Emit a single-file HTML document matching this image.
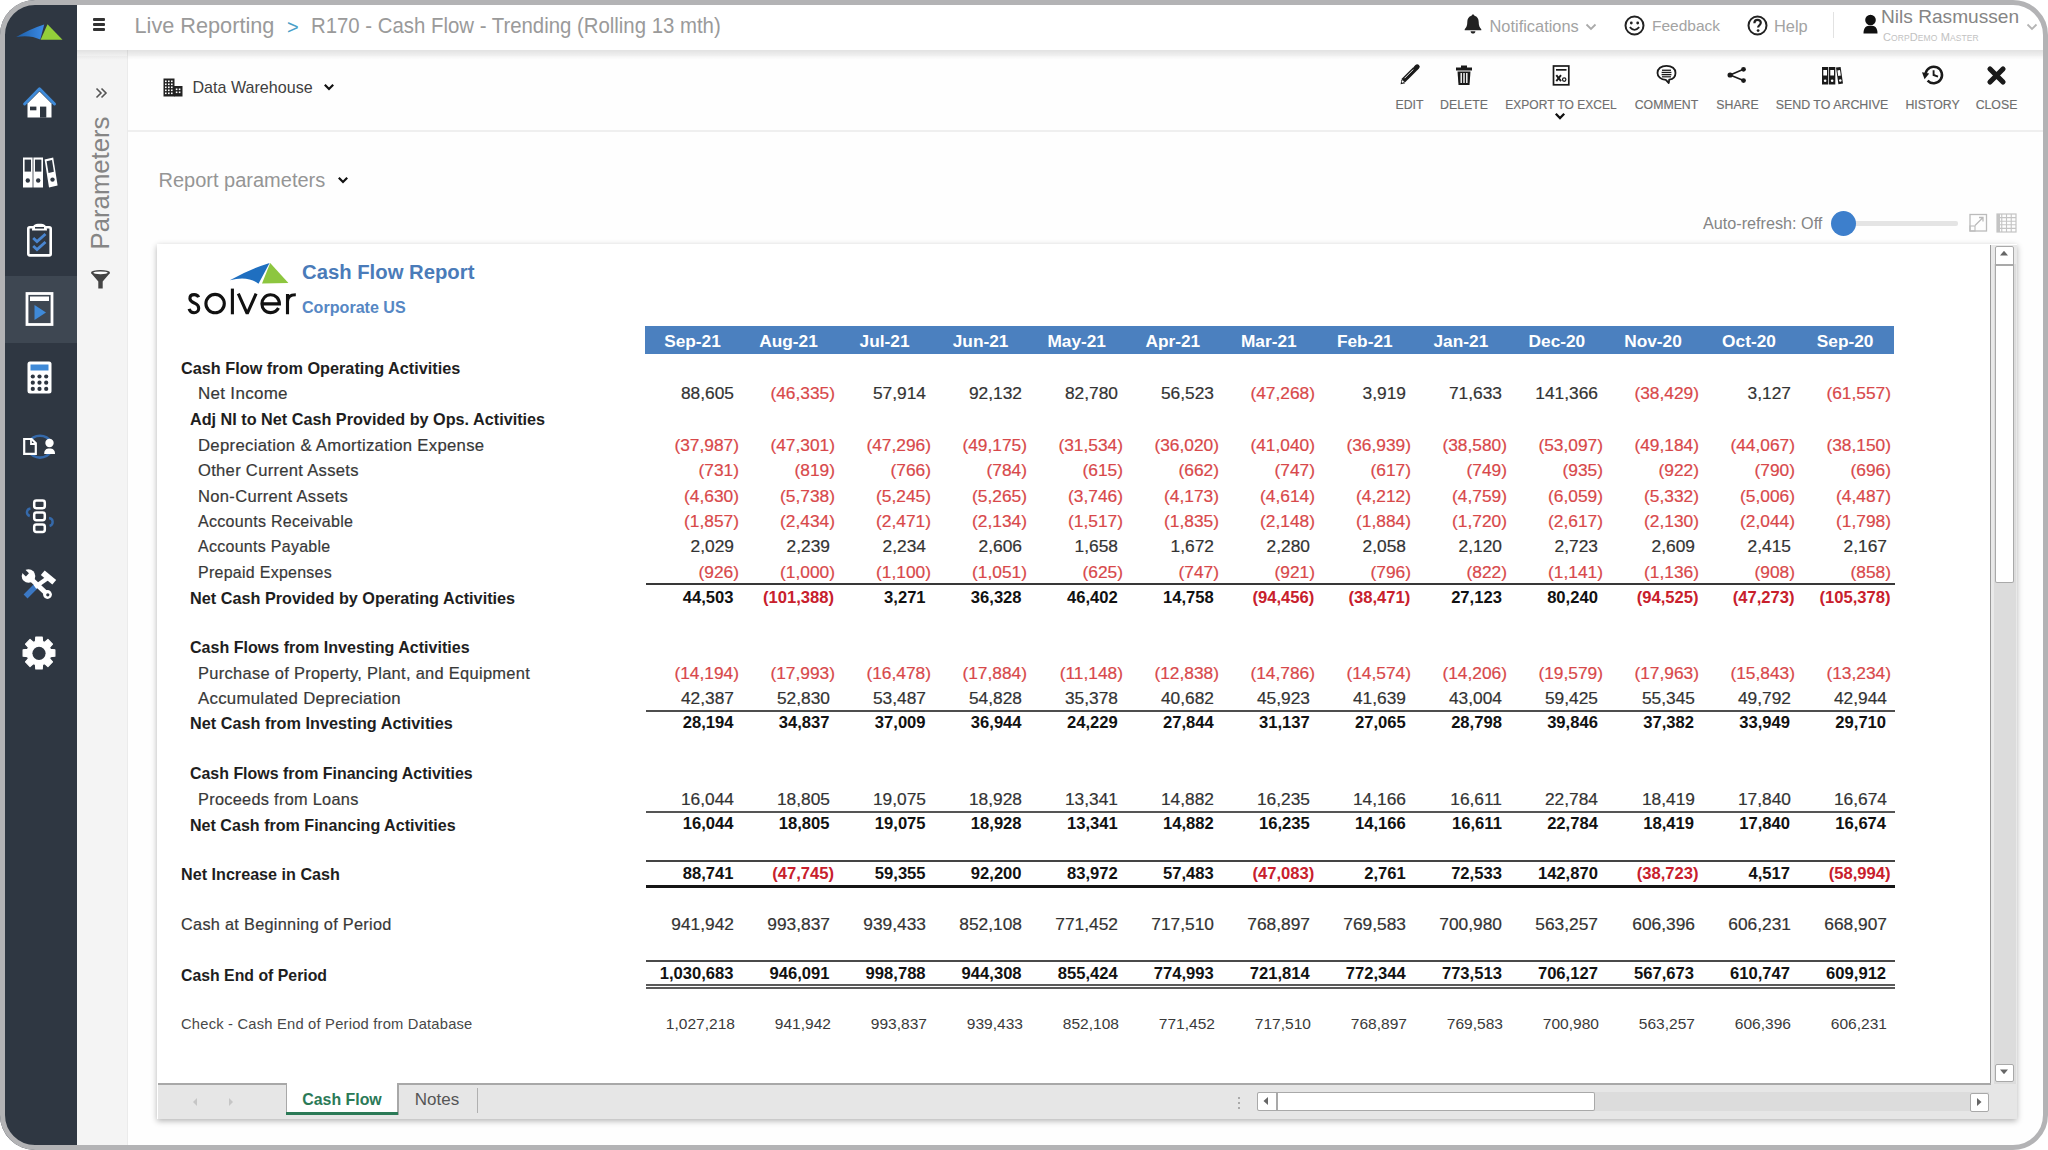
<!DOCTYPE html>
<html><head><meta charset="utf-8"><title>Cash Flow</title>
<style>
html,body{margin:0;padding:0;width:2048px;height:1150px;overflow:hidden;background:#fff;}
body{font-family:"Liberation Sans", sans-serif;position:relative;}
.t{position:absolute;white-space:nowrap;}
.b{position:absolute;}
svg{position:absolute;overflow:visible;}
#clip{position:absolute;left:0;top:0;width:2048px;height:1150px;border-radius:35px;overflow:hidden;background:#fbfbfb;}
#frame{position:absolute;left:0;top:0;width:2048px;height:1150px;box-sizing:border-box;border:5px solid #b3b3b5;border-radius:35px;z-index:50;}
</style></head><body>
<div id="clip">

<div class="b" style="left:0px;top:0px;width:77px;height:1150px;background:#2f3742;"></div>
<div class="b" style="left:5px;top:276px;width:72px;height:67px;background:#3e4752;"></div>
<div class="b" style="left:77px;top:0px;width:1971px;height:50px;background:#fff;"></div>
<div class="b" style="left:77px;top:50px;width:1971px;height:10px;background:linear-gradient(rgba(0,0,0,0.10),rgba(0,0,0,0));z-index:2;"></div>
<div class="b" style="left:77px;top:56px;width:50px;height:1094px;background:#f4f4f4;"></div>
<div class="b" style="left:127px;top:50px;width:1px;height:1100px;background:#ebebeb;"></div>
<div class="b" style="left:128px;top:56px;width:1920px;height:1094px;background:#fefefe;"></div>
<div class="b" style="left:128px;top:130px;width:1915px;height:2px;background:#efefef;"></div>
<div class="b" style="left:93px;top:18px;width:12px;height:2.6px;background:#333;border-radius:1px;"></div>
<div class="b" style="left:93px;top:23px;width:12px;height:2.6px;background:#333;border-radius:1px;"></div>
<div class="b" style="left:93px;top:28px;width:12px;height:2.6px;background:#333;border-radius:1px;"></div>
<svg style="left:0;top:0" width="77" height="50" viewBox="0 0 77 50"><defs><linearGradient id="lg1" x1="0" x2="1"><stop offset="0" stop-color="#1d5fa8"/><stop offset="1" stop-color="#3b8ae6"/></linearGradient></defs><path d="M16.2 37 Q30 34.5 40.3 39.6 L44.2 24.4 Q31 28.5 16.2 37 Z" fill="url(#lg1)"/><path d="M47.5 24.3 L62.5 39.8 L40.6 39.8 Z" fill="#94cf3a"/></svg>
<div class="t" style="left:134.5px;top:15.4px;font-size:21.7px;line-height:21.7px;color:#9a9a9a;">Live Reporting</div>
<div class="t" style="left:287.0px;top:16.6px;font-size:20px;line-height:20px;color:#4a9fc8;">&gt;</div>
<div class="t" style="left:310.7px;top:15.4px;font-size:21.7px;line-height:21.7px;transform:scaleX(0.9390);transform-origin:left center;color:#9a9a9a;">R170 - Cash Flow - Trending (Rolling 13 mth)</div>
<svg style="left:1464px;top:13px" width="18" height="21" viewBox="0 0 18 21"><path d="M9 1.5c.9 0 1.4.6 1.4 1.3 2.9.7 4.3 3.2 4.3 6.2 0 3.2.8 5.5 2.6 7.3v.9H.7v-.9C2.5 14.5 3.3 12.2 3.3 9c0-3 1.4-5.5 4.3-6.2 0-.7.5-1.3 1.4-1.3z" fill="#222"/><path d="M6.6 18.2h4.8c0 1.4-1.1 2.3-2.4 2.3s-2.4-.9-2.4-2.3z" fill="#222"/></svg>
<div class="t" style="left:1489.5px;top:17.6px;font-size:16.4px;line-height:16.4px;color:#a3a3a3;">Notifications</div>
<svg style="left:1585px;top:23px" width="12" height="8" viewBox="0 0 12 8"><path d="M1.5 1.5 L6 6 L10.5 1.5" stroke="#aaa" stroke-width="1.8" fill="none"/></svg>
<svg style="left:1624px;top:15px" width="21" height="21" viewBox="0 0 21 21"><circle cx="10.5" cy="10.5" r="9" stroke="#222" stroke-width="2" fill="none"/><circle cx="7.3" cy="8" r="1.4" fill="#222"/><circle cx="13.7" cy="8" r="1.4" fill="#222"/><path d="M5.8 12.2 Q10.5 17.5 15.2 12.2" stroke="#222" stroke-width="1.8" fill="none"/></svg>
<div class="t" style="left:1652.0px;top:18.4px;font-size:15.5px;line-height:15.5px;color:#a3a3a3;">Feedback</div>
<svg style="left:1747px;top:15px" width="21" height="21" viewBox="0 0 21 21"><circle cx="10.5" cy="10.5" r="9" stroke="#222" stroke-width="2" fill="none"/><path d="M7.4 8.2 C7.4 5.8 9 4.9 10.6 4.9 C12.4 4.9 13.8 6 13.8 7.8 C13.8 10.1 11.1 10.3 11.1 12.6" stroke="#222" stroke-width="2.2" fill="none"/><circle cx="11.1" cy="15.6" r="1.4" fill="#222"/></svg>
<div class="t" style="left:1774.0px;top:17.6px;font-size:16.4px;line-height:16.4px;color:#a3a3a3;">Help</div>
<div class="b" style="left:1833px;top:12px;width:1px;height:26px;background:#e2e2e2;"></div>
<svg style="left:1863px;top:14px" width="16" height="21" viewBox="0 0 16 21"><circle cx="7.5" cy="6" r="5.3" fill="#111"/><path d="M0.5 19.5 C0.5 13.5 3 11.8 7.5 11.8 C12 11.8 14.5 13.5 14.5 19.5 Z" fill="#111"/></svg>
<div class="t" style="left:1881.0px;top:8.3px;font-size:18.6px;line-height:18.6px;transform:scaleX(1.0280);transform-origin:left center;color:#858585;">Nils Rasmussen</div>
<div class="t" style="left:1883.0px;top:31.7px;font-size:11px;line-height:11px;color:#c2c2c2;letter-spacing:0.1px;">C<span style="font-size:8.5px">ORP</span>D<span style="font-size:8.5px">EMO</span> M<span style="font-size:8.5px">ASTER</span></div>
<svg style="left:2026px;top:23px" width="12" height="8" viewBox="0 0 12 8"><path d="M1.5 1.5 L6 6 L10.5 1.5" stroke="#b5b5b5" stroke-width="1.8" fill="none"/></svg>
<svg style="left:22px;top:86px" width="34" height="34" viewBox="0 0 34 34"><path d="M5.5 17.5 L17.5 5.5 L29.5 17.5 V31.6 H5.5 Z" fill="#ffffff"/><rect x="8" y="20.6" width="6.4" height="3.7" fill="#2e3640"/><rect x="18" y="20.6" width="6.3" height="11" fill="#2e3640"/><path d="M2.6 18 L17.5 2.8 L32.5 18" stroke="#3f8ad8" stroke-width="3" fill="none" stroke-linejoin="round" stroke-linecap="round"/></svg>
<svg style="left:22px;top:156px" width="36" height="33" viewBox="0 0 36 33"><rect x="1" y="1.5" width="9.6" height="30" fill="#ffffff"/><rect x="11.4" y="1.5" width="9.6" height="30" fill="#ffffff"/><path d="M22.6 3.6 L31.2 1.6 L35.6 29.6 L27 31.6 Z" fill="#ffffff"/><rect x="2.6" y="3.6" width="6.4" height="12" fill="#2f3742"/><rect x="13" y="3.6" width="6.4" height="12" fill="#2f3742"/><path d="M24.6 5.2 L30 4 L31.9 15.8 L26.5 17 Z" fill="#2f3742"/><circle cx="5.8" cy="24.5" r="2.2" fill="#2f3742"/><circle cx="16.2" cy="24.5" r="2.2" fill="#2f3742"/><circle cx="30.5" cy="23.6" r="2.2" fill="#2f3742"/></svg>
<svg style="left:26px;top:221px" width="27" height="36" viewBox="0 0 27 36"><rect x="2.3" y="6.2" width="22.4" height="28.2" rx="1.5" stroke="#ffffff" stroke-width="2.6" fill="none"/><path d="M6 9.5 C6 4.5 8.5 2.8 13.5 2.8 C18.5 2.8 21 4.5 21 9.5 Z" fill="#ffffff"/><rect x="9" y="6" width="9" height="1.6" fill="#2f3742"/><path d="M7.2 17 L11 20.6 L19.5 13" stroke="#4a86d0" stroke-width="2.8" fill="none"/><path d="M7.2 25 L11 28.6 L19.5 21" stroke="#4a86d0" stroke-width="2.8" fill="none"/></svg>
<svg style="left:25px;top:291px" width="29" height="36" viewBox="0 0 29 36"><rect x="2" y="2.5" width="25" height="31" stroke="#ffffff" stroke-width="2.8" fill="none"/><rect x="5" y="5.5" width="19" height="4.5" fill="#ffffff"/><path d="M9.5 14 L21 21.5 L9.5 29 Z" fill="#3f8ad8"/></svg>
<svg style="left:27px;top:361px" width="25" height="33" viewBox="0 0 25 33"><rect x="0.5" y="0.5" width="24" height="32" rx="2.5" fill="#ffffff"/><rect x="3.5" y="3.5" width="18" height="6" fill="#3f8ad8"/><circle cx="5.8" cy="15.5" r="2.1" fill="#2e3640"/><circle cx="5.8" cy="21.7" r="2.1" fill="#2e3640"/><circle cx="5.8" cy="27.9" r="2.1" fill="#2e3640"/><circle cx="12.5" cy="15.5" r="2.1" fill="#2e3640"/><circle cx="12.5" cy="21.7" r="2.1" fill="#2e3640"/><circle cx="12.5" cy="27.9" r="2.1" fill="#2e3640"/><circle cx="19.2" cy="15.5" r="2.1" fill="#2e3640"/><circle cx="19.2" cy="21.7" r="2.1" fill="#2e3640"/><circle cx="19.2" cy="27.9" r="2.1" fill="#2e3640"/></svg>
<svg style="left:22px;top:430px" width="36" height="34" viewBox="0 0 36 34"><path d="M6.8 12.2 A13 13 0 0 1 29.2 12.2" stroke="#3569aa" stroke-width="2.6" fill="none"/><path d="M29.2 21.2 A13 13 0 0 1 6.8 21.2" stroke="#3569aa" stroke-width="2.6" fill="none"/><path d="M2.2 9 H9.6 L13.8 13.2 V23.8 H2.2 Z" stroke="#ffffff" stroke-width="2.2" fill="#2f3742" stroke-linejoin="miter"/><path d="M9 9 V14 H13.8" stroke="#ffffff" stroke-width="1.8" fill="none"/><circle cx="27.5" cy="13" r="4.2" fill="#ffffff"/><path d="M22.2 24 C22.2 19.6 24.2 18.4 27.5 18.4 C30.8 18.4 33 19.6 33 24 Z" fill="#ffffff"/></svg>
<svg style="left:24px;top:498px" width="32" height="37" viewBox="0 0 32 37"><rect x="10.2" y="2.6" width="10.6" height="7.6" rx="2.2" stroke="#ffffff" stroke-width="2.5" fill="none"/><rect x="10.2" y="14.6" width="10.6" height="7.6" rx="2.2" stroke="#ffffff" stroke-width="2.5" fill="none"/><rect x="10.2" y="26.4" width="10.6" height="7.6" rx="2.2" stroke="#ffffff" stroke-width="2.5" fill="none"/><path d="M6.5 10.5 C2.2 11 1.6 16.5 5.8 18" stroke="#3569aa" stroke-width="2.4" fill="none"/><path d="M25 20 C29.5 20.5 30 26.5 25.6 28" stroke="#3569aa" stroke-width="2.4" fill="none"/></svg>
<svg style="left:21px;top:566px" width="36" height="36" viewBox="0 0 36 36"><path d="M6.5 28.5 L14.5 20.5" stroke="#3b78c4" stroke-width="5.5" stroke-linecap="square"/><path d="M14 21 L27.5 11.5" stroke="#ffffff" stroke-width="4.2"/><polygon points="31.3,18.6 35.2,14.0 23.7,4.4 19.8,9.0" fill="#ffffff"/><path d="M9 12 L26.5 28.5" stroke="#ffffff" stroke-width="5"/><circle cx="26.5" cy="28.5" r="4.4" fill="#ffffff"/><circle cx="26.8" cy="28.8" r="1.6" fill="#2f3742"/><circle cx="7.5" cy="10" r="6.8" fill="#ffffff"/><polygon points="7.96,7.37 4.88,10.53 -0.52,5.28 2.56,2.12" fill="#2f3742"/></svg>
<svg style="left:22px;top:636px" width="34" height="34" viewBox="0 0 34 34"><polygon points="32.88,13.78 32.88,20.22 28.46,20.55 27.61,22.60 30.50,25.95 25.95,30.50 22.60,27.61 20.55,28.46 20.22,32.88 13.78,32.88 13.45,28.46 11.40,27.61 8.05,30.50 3.50,25.95 6.39,22.60 5.54,20.55 1.12,20.22 1.12,13.78 5.54,13.45 6.39,11.40 3.50,8.05 8.05,3.50 11.40,6.39 13.45,5.54 13.78,1.12 20.22,1.12 20.55,5.54 22.60,6.39 25.95,3.50 30.50,8.05 27.61,11.40 28.46,13.45" fill="#ffffff" stroke="#ffffff" stroke-width="1.2" stroke-linejoin="round"/><circle cx="17" cy="17.3" r="6.6" fill="#2f3742"/></svg>
<svg style="left:95px;top:87px" width="13" height="12" viewBox="0 0 13 12"><path d="M1.5 1.5 L6 6 L1.5 10.5 M6.5 1.5 L11 6 L6.5 10.5" stroke="#555" stroke-width="1.6" fill="none"/></svg>
<div class="t" style="left:100px;top:183px;font-size:25.7px;line-height:26px;color:#858585;transform:translate(-50%,-50%) rotate(-90deg);">Parameters</div>
<svg style="left:90px;top:269px" width="21" height="21" viewBox="0 0 21 21"><ellipse cx="10.5" cy="3.6" rx="9.5" ry="2.6" fill="#444"/><path d="M1 4 L8.3 12.5 V19.5 L12.7 19.5 V12.5 L20 4 Z" fill="#444"/><ellipse cx="10.5" cy="3.8" rx="7.2" ry="1.4" fill="#fff"/></svg>
<svg style="left:163px;top:78px" width="20" height="19" viewBox="0 0 20 19"><rect x="0.5" y="0.5" width="11" height="18" fill="#222"/><rect x="11" y="8" width="8.5" height="10.5" fill="#222"/><rect x="2" y="2.5" width="1.6" height="1.6" fill="#fff"/><rect x="2" y="5.5" width="1.6" height="1.6" fill="#fff"/><rect x="2" y="8.5" width="1.6" height="1.6" fill="#fff"/><rect x="2" y="11.5" width="1.6" height="1.6" fill="#fff"/><rect x="2" y="14.5" width="1.6" height="1.6" fill="#fff"/><rect x="5" y="2.5" width="1.6" height="1.6" fill="#fff"/><rect x="5" y="5.5" width="1.6" height="1.6" fill="#fff"/><rect x="5" y="8.5" width="1.6" height="1.6" fill="#fff"/><rect x="5" y="11.5" width="1.6" height="1.6" fill="#fff"/><rect x="5" y="14.5" width="1.6" height="1.6" fill="#fff"/><rect x="8" y="2.5" width="1.6" height="1.6" fill="#fff"/><rect x="8" y="5.5" width="1.6" height="1.6" fill="#fff"/><rect x="8" y="8.5" width="1.6" height="1.6" fill="#fff"/><rect x="8" y="11.5" width="1.6" height="1.6" fill="#fff"/><rect x="8" y="14.5" width="1.6" height="1.6" fill="#fff"/><rect x="12.8" y="10.5" width="1.6" height="1.6" fill="#fff"/><rect x="12.8" y="13.5" width="1.6" height="1.6" fill="#fff"/><rect x="15.8" y="10.5" width="1.6" height="1.6" fill="#fff"/><rect x="15.8" y="13.5" width="1.6" height="1.6" fill="#fff"/></svg>
<div class="t" style="left:192.5px;top:79.4px;font-size:16.1px;line-height:16.1px;color:#404040;">Data Warehouse</div>
<svg style="left:323px;top:83px" width="12" height="9" viewBox="0 0 12 9"><path d="M1.8 1.8 L6 6 L10.2 1.8" stroke="#111" stroke-width="2.2" fill="none"/></svg>
<div class="t" style="left:1329.5px;width:160px;text-align:center;top:99.4px;font-size:12.3px;line-height:12.3px;color:#6e6e6e;-webkit-text-stroke:0.15px #6e6e6e;">EDIT</div>
<div class="t" style="left:1384.0px;width:160px;text-align:center;top:99.4px;font-size:12.3px;line-height:12.3px;color:#6e6e6e;-webkit-text-stroke:0.15px #6e6e6e;">DELETE</div>
<div class="t" style="left:1480.5px;width:160px;text-align:center;top:99.4px;font-size:12.3px;line-height:12.3px;transform:scaleX(0.9780);transform-origin:center center;color:#6e6e6e;-webkit-text-stroke:0.15px #6e6e6e;">EXPORT TO EXCEL</div>
<div class="t" style="left:1586.5px;width:160px;text-align:center;top:99.4px;font-size:12.3px;line-height:12.3px;color:#6e6e6e;-webkit-text-stroke:0.15px #6e6e6e;">COMMENT</div>
<div class="t" style="left:1657.5px;width:160px;text-align:center;top:99.4px;font-size:12.3px;line-height:12.3px;color:#6e6e6e;-webkit-text-stroke:0.15px #6e6e6e;">SHARE</div>
<div class="t" style="left:1752.0px;width:160px;text-align:center;top:99.4px;font-size:12.3px;line-height:12.3px;transform:scaleX(1.0100);transform-origin:center center;color:#6e6e6e;-webkit-text-stroke:0.15px #6e6e6e;">SEND TO ARCHIVE</div>
<div class="t" style="left:1852.5px;width:160px;text-align:center;top:99.4px;font-size:12.3px;line-height:12.3px;color:#6e6e6e;-webkit-text-stroke:0.15px #6e6e6e;">HISTORY</div>
<div class="t" style="left:1916.5px;width:160px;text-align:center;top:99.4px;font-size:12.3px;line-height:12.3px;color:#6e6e6e;-webkit-text-stroke:0.15px #6e6e6e;">CLOSE</div>
<svg style="left:1399px;top:65px" width="21" height="21" viewBox="0 0 21 21"><path d="M4.2 15.8 L16 4" stroke="#1a1a1a" stroke-width="5"/><path d="M16.8 3.2 L18.2 1.8" stroke="#1a1a1a" stroke-width="5" stroke-linecap="round"/><path d="M5.6 13.2 L14.2 4.6" stroke="#fff" stroke-width="0.9"/><path d="M1.6 19.2 L2.5 14.6 L6.2 18.3 Z" fill="#1a1a1a"/><circle cx="3.6" cy="16.8" r="1" fill="#fff"/></svg>
<svg style="left:1455px;top:65px" width="18" height="21" viewBox="0 0 18 21"><rect x="1" y="2.5" width="16" height="3" fill="#1a1a1a"/><rect x="6" y="0.5" width="6" height="3" fill="#1a1a1a"/><path d="M2.5 6.5 H15.5 L14.5 20 H3.5 Z" fill="#1a1a1a"/><rect x="5.5" y="8" width="1.4" height="10" fill="#fff"/><rect x="8.3" y="8" width="1.4" height="10" fill="#fff"/><rect x="11.1" y="8" width="1.4" height="10" fill="#fff"/></svg>
<svg style="left:1551px;top:65px" width="20" height="21" viewBox="0 0 20 21"><rect x="2.5" y="1" width="15.3" height="18.8" stroke="#1a1a1a" stroke-width="1.7" fill="none"/><rect x="5" y="4" width="10.5" height="1.7" fill="#1a1a1a"/><path d="M5.3 10.2 L10 16.2 M10 10.2 L5.3 16.2" stroke="#1a1a1a" stroke-width="1.9"/><circle cx="13.2" cy="14.6" r="1.7" stroke="#1a1a1a" stroke-width="1.2" fill="none"/></svg>
<svg style="left:1554px;top:112px" width="12" height="9" viewBox="0 0 12 9"><path d="M1.8 1.8 L6 6 L10.2 1.8" stroke="#111" stroke-width="2.3" fill="none"/></svg>
<svg style="left:1655px;top:64px" width="23" height="22" viewBox="0 0 23 22"><path d="M11.5 1.8 C16.9 1.8 20.5 4.8 20.5 8.9 C20.5 12.4 17.8 15 14.2 15.7 L13.8 19 L10.8 15.9 C5.8 15.6 2.5 12.6 2.5 8.9 C2.5 4.8 6.1 1.8 11.5 1.8 Z" stroke="#1a1a1a" stroke-width="1.8" fill="none" stroke-linejoin="round"/><rect x="7" y="5.6" width="9" height="1.3" fill="#1a1a1a"/><rect x="6.6" y="7.8" width="9.8" height="1.3" fill="#1a1a1a"/><rect x="6.6" y="10" width="9.8" height="1.3" fill="#1a1a1a"/><rect x="7" y="12.2" width="9" height="1.2" fill="#1a1a1a"/></svg>
<svg style="left:1726px;top:65px" width="22" height="20" viewBox="0 0 22 20"><path d="M4.1 10 L17.5 4.3 M4.1 10 L17.5 15.6" stroke="#1a1a1a" stroke-width="1.6"/><circle cx="4.1" cy="10" r="2.6" fill="#1a1a1a"/><circle cx="17.5" cy="4.3" r="2.4" fill="#1a1a1a"/><circle cx="17.5" cy="15.6" r="2.4" fill="#1a1a1a"/></svg>
<svg style="left:1821px;top:66px" width="23" height="20" viewBox="0 0 23 20"><rect x="1" y="1" width="6.3" height="17.5" fill="#1a1a1a"/><rect x="8" y="1" width="6.3" height="17.5" fill="#1a1a1a"/><path d="M15 1.6 L19.6 0.9 L22 17.6 L17.4 18.3 Z" fill="#1a1a1a"/><rect x="2.3" y="4" width="3.7" height="5.5" fill="#fff"/><rect x="9.3" y="4" width="3.7" height="5.5" fill="#fff"/><path d="M16.4 4.4 L19 4 L19.8 9.5 L17.2 9.9 Z" fill="#fff"/><circle cx="4.15" cy="14.8" r="1.3" fill="#fff"/><circle cx="11.15" cy="14.8" r="1.3" fill="#fff"/><circle cx="19.3" cy="14.5" r="1.2" fill="#fff"/></svg>
<svg style="left:1921px;top:64px" width="23" height="22" viewBox="0 0 23 22"><path d="M6.6 16.6 A8.3 8.3 0 1 0 4.6 9.2" stroke="#1a1a1a" stroke-width="2.5" fill="none"/><path d="M1 8.2 L8.2 9.6 L3.6 15.2 Z" fill="#1a1a1a"/><path d="M12.6 6.2 V11 L17 12.6" stroke="#1a1a1a" stroke-width="1.9" fill="none"/></svg>
<svg style="left:1987px;top:66px" width="19" height="19" viewBox="0 0 19 19"><path d="M3 3 L16 16 M16 3 L3 16" stroke="#1a1a1a" stroke-width="5.2" stroke-linecap="round"/></svg>
<div class="t" style="left:158.5px;top:169.6px;font-size:20px;line-height:20px;color:#959595;">Report parameters</div>
<svg style="left:337px;top:176px" width="12" height="9" viewBox="0 0 12 9"><path d="M1.8 1.8 L6 6 L10.2 1.8" stroke="#111" stroke-width="2.2" fill="none"/></svg>
<div class="t" style="left:1703.0px;top:215.3px;font-size:16.2px;line-height:16.2px;color:#858585;">Auto-refresh: Off</div>
<div class="b" style="left:1844px;top:221px;width:114px;height:4.5px;background:#e4e4e4;border-radius:2px;"></div>
<div class="b" style="left:1831px;top:210.5px;width:25px;height:25px;border-radius:50%;background:#3d7fcc;"></div>
<svg style="left:1969px;top:213px" width="19" height="20" viewBox="0 0 19 20"><rect x="1" y="1.5" width="16.5" height="16.5" stroke="#bbb" stroke-width="1.3" fill="none"/><path d="M6 12.5 L14 4.5 M10 4.5 H14 V8.5" stroke="#bbb" stroke-width="1.3" fill="none"/><rect x="1" y="13" width="5" height="5" stroke="#bbb" stroke-width="1.1" fill="none"/></svg>
<svg style="left:1996px;top:213px" width="21" height="20" viewBox="0 0 21 20"><rect x="1" y="1" width="19" height="18" fill="none" stroke="#c4c4c4" stroke-width="1.2"/><path d="M5.75 1 V19" stroke="#c4c4c4" stroke-width="1.1"/><path d="M10.5 1 V19" stroke="#c4c4c4" stroke-width="1.1"/><path d="M15.25 1 V19" stroke="#c4c4c4" stroke-width="1.1"/><path d="M1 4.6 H20" stroke="#c4c4c4" stroke-width="1.1"/><path d="M1 8.2 H20" stroke="#c4c4c4" stroke-width="1.1"/><path d="M1 11.8 H20" stroke="#c4c4c4" stroke-width="1.1"/><path d="M1 15.4 H20" stroke="#c4c4c4" stroke-width="1.1"/><rect x="1" y="1" width="3" height="18" fill="#c4c4c4"/></svg>
<div class="b" style="left:157px;top:244px;width:1860px;height:875px;background:#fff;box-shadow:0 2px 6px rgba(0,0,0,0.30);"></div>
<div class="b" style="left:1990px;top:245px;width:1.3px;height:839px;background:#9a9a9a;"></div>
<div class="b" style="left:1991.3px;top:245px;width:25.7px;height:839px;background:#e9e9e9;"></div>
<div class="b" style="left:1994px;top:264px;width:22px;height:820px;background:#dcdcdc;"></div>
<div class="b" style="left:1995px;top:245.5px;width:17px;height:17.5px;background:#fff;border:1.2px solid #a9a9a9;border-radius:2px 2px 0 0;"></div>
<div class="b" style="left:1995px;top:264px;width:17px;height:316px;background:#fff;border:1.2px solid #a9a9a9;border-top-width:2px;border-radius:0 0 2px 2px;"></div>
<svg style="left:1999px;top:249px" width="10" height="8" viewBox="0 0 10 8"><path d="M1 6.5 L5 1.8 L9 6.5 Z" fill="#666"/></svg>
<div class="b" style="left:1995px;top:1064px;width:17px;height:16px;background:#fff;border:1.2px solid #a9a9a9;border-radius:2px;"></div>
<svg style="left:1999px;top:1068px" width="10" height="8" viewBox="0 0 10 8"><path d="M1 1.5 L5 6.2 L9 1.5 Z" fill="#666"/></svg>
<div class="b" style="left:158px;top:1083.5px;width:1833px;height:35.5px;background:#e6e6e6;"></div>
<div class="b" style="left:158px;top:1083px;width:1833px;height:1.6px;background:#a8a8a8;"></div>
<div class="b" style="left:1991px;top:1084px;width:26px;height:35px;background:#e6e6e6;"></div>
<svg style="left:190px;top:1096px" width="10" height="12" viewBox="0 0 10 12"><path d="M7 2 L3 6 L7 10" fill="#c6c6c6"/></svg>
<svg style="left:226px;top:1096px" width="10" height="12" viewBox="0 0 10 12"><path d="M3 2 L7 6 L3 10" fill="#c6c6c6"/></svg>
<div class="b" style="left:286px;top:1083px;width:112px;height:32px;background:#fff;"></div>
<div class="b" style="left:285.5px;top:1083px;width:1.5px;height:32px;background:#a8a8a8;"></div>
<div class="b" style="left:397px;top:1083px;width:1.5px;height:32px;background:#a8a8a8;"></div>
<div class="b" style="left:286px;top:1112px;width:112px;height:3px;background:#2b7a57;"></div>
<div class="t" style="left:282.0px;width:120px;text-align:center;top:1091.5px;font-size:15.9px;line-height:15.9px;color:#2b7a57;font-weight:700;">Cash Flow</div>
<div class="t" style="left:397.0px;width:80px;text-align:center;top:1090.6px;font-size:17px;line-height:17px;color:#555;">Notes</div>
<div class="b" style="left:476.5px;top:1088px;width:1.3px;height:25px;background:#b0b0b0;"></div>
<div class="b" style="left:1237.5px;top:1097px;width:2px;height:2px;background:#aaa;"></div>
<div class="b" style="left:1237.5px;top:1102px;width:2px;height:2px;background:#aaa;"></div>
<div class="b" style="left:1237.5px;top:1107px;width:2px;height:2px;background:#aaa;"></div>
<div class="b" style="left:1257px;top:1092px;width:732px;height:19px;background:#dcdcdc;"></div>
<div class="b" style="left:1256.5px;top:1092px;width:18px;height:17px;background:#fff;border:1.2px solid #a9a9a9;border-radius:2px 0 0 2px;"></div>
<div class="b" style="left:1276px;top:1092px;width:316px;height:17px;background:#fff;border:1.2px solid #a9a9a9;border-left-width:2px;border-radius:0 2px 2px 0;"></div>
<svg style="left:1261px;top:1096px" width="10" height="10" viewBox="0 0 10 10"><path d="M7 1 L2.5 5 L7 9 Z" fill="#666"/></svg>
<div class="b" style="left:1970px;top:1092.5px;width:17px;height:17px;background:#fff;border:1.2px solid #a9a9a9;border-radius:2px;"></div>
<svg style="left:1974px;top:1096.5px" width="10" height="10" viewBox="0 0 10 10"><path d="M3 1 L7.5 5 L3 9 Z" fill="#666"/></svg>
<svg style="left:180px;top:255px" width="120" height="65" viewBox="0 0 120 65"><path d="M49.8 25.2 Q68 20.5 78.5 28.7 L89.6 7.9 Q70 14 49.8 25.2 Z" fill="#1f6fc0"/><path d="M90.2 7.9 L108.4 28.1 L82 28.4 Z" fill="#8dc63f"/><g stroke="#111" stroke-width="3.1" fill="none" stroke-linecap="butt"><path d="M18.6 42.3 C17.9 40.4 16.2 39.6 14.2 39.6 C11.6 39.6 9.9 41.2 9.9 43.5 C9.9 46.3 12.6 47.3 14.6 48.2 C16.9 49.2 18.7 50.6 18.7 53.3 C18.7 55.9 16.7 57.7 14.1 57.7 C11.5 57.7 9.7 56.1 9.1 53.9"/><circle cx="35.1" cy="48.6" r="9.2"/><path d="M52.4 33.6 V59.3"/><path d="M58.3 38.6 L67.2 58.7 L76.1 38.6" stroke-linejoin="bevel"/><path d="M81.9 48.9 H99.4 C99.4 43.4 95.6 39.8 90.6 39.8 C85.5 39.8 81.9 43.9 81.9 48.8 C81.9 53.8 85.5 57.6 90.6 57.6 C94.2 57.6 97 55.9 98.5 53.1"/><path d="M107.5 59.3 V39 M107.5 46.5 C107.5 41.8 110.3 39.7 115.8 39.7"/></g></svg>
<div class="t" style="left:302.0px;top:262.1px;font-size:20.3px;line-height:20.3px;color:#4a7bb9;font-weight:700;">Cash Flow Report</div>
<div class="t" style="left:302.0px;top:299.0px;font-size:16.1px;line-height:16.1px;color:#5687c4;font-weight:700;">Corporate US</div>
<div class="b" style="left:644.5px;top:325.7px;width:1249.8px;height:28.7px;background:#4b80bf;"></div>
<div class="t" style="left:644.5px;width:96px;text-align:center;top:333.4px;font-size:17.3px;line-height:17.3px;color:#fff;font-weight:700;">Sep-21</div>
<div class="t" style="left:740.5px;width:96px;text-align:center;top:333.4px;font-size:17.3px;line-height:17.3px;color:#fff;font-weight:700;">Aug-21</div>
<div class="t" style="left:836.6px;width:96px;text-align:center;top:333.4px;font-size:17.3px;line-height:17.3px;color:#fff;font-weight:700;">Jul-21</div>
<div class="t" style="left:932.6px;width:96px;text-align:center;top:333.4px;font-size:17.3px;line-height:17.3px;color:#fff;font-weight:700;">Jun-21</div>
<div class="t" style="left:1028.7px;width:96px;text-align:center;top:333.4px;font-size:17.3px;line-height:17.3px;color:#fff;font-weight:700;">May-21</div>
<div class="t" style="left:1124.8px;width:96px;text-align:center;top:333.4px;font-size:17.3px;line-height:17.3px;color:#fff;font-weight:700;">Apr-21</div>
<div class="t" style="left:1220.8px;width:96px;text-align:center;top:333.4px;font-size:17.3px;line-height:17.3px;color:#fff;font-weight:700;">Mar-21</div>
<div class="t" style="left:1316.8px;width:96px;text-align:center;top:333.4px;font-size:17.3px;line-height:17.3px;color:#fff;font-weight:700;">Feb-21</div>
<div class="t" style="left:1412.9px;width:96px;text-align:center;top:333.4px;font-size:17.3px;line-height:17.3px;color:#fff;font-weight:700;">Jan-21</div>
<div class="t" style="left:1508.9px;width:96px;text-align:center;top:333.4px;font-size:17.3px;line-height:17.3px;color:#fff;font-weight:700;">Dec-20</div>
<div class="t" style="left:1605.0px;width:96px;text-align:center;top:333.4px;font-size:17.3px;line-height:17.3px;color:#fff;font-weight:700;">Nov-20</div>
<div class="t" style="left:1701.0px;width:96px;text-align:center;top:333.4px;font-size:17.3px;line-height:17.3px;color:#fff;font-weight:700;">Oct-20</div>
<div class="t" style="left:1797.1px;width:96px;text-align:center;top:333.4px;font-size:17.3px;line-height:17.3px;color:#fff;font-weight:700;">Sep-20</div>
<div class="t" style="left:181.0px;top:360.0px;font-size:16.16px;line-height:16.16px;transform:scaleX(1.0060);transform-origin:left center;color:#1e1e1e;font-weight:700;">Cash Flow from Operating Activities</div>
<div class="t" style="left:198.0px;top:386.4px;font-size:16.6px;line-height:16.6px;transform:scaleX(1.0230);transform-origin:left center;color:#383838;letter-spacing:0.3px;-webkit-text-stroke:0.2px #383838;">Net Income</div>
<div class="t" style="left:644.0px;width:90px;text-align:right;top:386.4px;font-size:16.6px;line-height:16.6px;transform:scaleX(1.0450);transform-origin:right center;color:#333;-webkit-text-stroke:0.2px #333;">88,605</div>
<div class="t" style="left:744.5px;width:90px;text-align:right;top:386.4px;font-size:16.6px;line-height:16.6px;transform:scaleX(1.0450);transform-origin:right center;color:#d8484a;-webkit-text-stroke:0.2px #d8484a;">(46,335)</div>
<div class="t" style="left:836.1px;width:90px;text-align:right;top:386.4px;font-size:16.6px;line-height:16.6px;transform:scaleX(1.0450);transform-origin:right center;color:#333;-webkit-text-stroke:0.2px #333;">57,914</div>
<div class="t" style="left:932.1px;width:90px;text-align:right;top:386.4px;font-size:16.6px;line-height:16.6px;transform:scaleX(1.0450);transform-origin:right center;color:#333;-webkit-text-stroke:0.2px #333;">92,132</div>
<div class="t" style="left:1028.2px;width:90px;text-align:right;top:386.4px;font-size:16.6px;line-height:16.6px;transform:scaleX(1.0450);transform-origin:right center;color:#333;-webkit-text-stroke:0.2px #333;">82,780</div>
<div class="t" style="left:1124.2px;width:90px;text-align:right;top:386.4px;font-size:16.6px;line-height:16.6px;transform:scaleX(1.0450);transform-origin:right center;color:#333;-webkit-text-stroke:0.2px #333;">56,523</div>
<div class="t" style="left:1224.8px;width:90px;text-align:right;top:386.4px;font-size:16.6px;line-height:16.6px;transform:scaleX(1.0450);transform-origin:right center;color:#d8484a;-webkit-text-stroke:0.2px #d8484a;">(47,268)</div>
<div class="t" style="left:1316.3px;width:90px;text-align:right;top:386.4px;font-size:16.6px;line-height:16.6px;transform:scaleX(1.0450);transform-origin:right center;color:#333;-webkit-text-stroke:0.2px #333;">3,919</div>
<div class="t" style="left:1412.4px;width:90px;text-align:right;top:386.4px;font-size:16.6px;line-height:16.6px;transform:scaleX(1.0450);transform-origin:right center;color:#333;-webkit-text-stroke:0.2px #333;">71,633</div>
<div class="t" style="left:1508.4px;width:90px;text-align:right;top:386.4px;font-size:16.6px;line-height:16.6px;transform:scaleX(1.0450);transform-origin:right center;color:#333;-webkit-text-stroke:0.2px #333;">141,366</div>
<div class="t" style="left:1609.0px;width:90px;text-align:right;top:386.4px;font-size:16.6px;line-height:16.6px;transform:scaleX(1.0450);transform-origin:right center;color:#d8484a;-webkit-text-stroke:0.2px #d8484a;">(38,429)</div>
<div class="t" style="left:1700.5px;width:90px;text-align:right;top:386.4px;font-size:16.6px;line-height:16.6px;transform:scaleX(1.0450);transform-origin:right center;color:#333;-webkit-text-stroke:0.2px #333;">3,127</div>
<div class="t" style="left:1801.1px;width:90px;text-align:right;top:386.4px;font-size:16.6px;line-height:16.6px;transform:scaleX(1.0450);transform-origin:right center;color:#d8484a;-webkit-text-stroke:0.2px #d8484a;">(61,557)</div>
<div class="t" style="left:189.5px;top:410.6px;font-size:16.16px;line-height:16.16px;transform:scaleX(1.0030);transform-origin:left center;color:#1e1e1e;font-weight:700;">Adj NI to Net Cash Provided by Ops. Activities</div>
<div class="t" style="left:198.0px;top:437.6px;font-size:16.6px;line-height:16.6px;transform:scaleX(1.0070);transform-origin:left center;color:#383838;letter-spacing:0.3px;-webkit-text-stroke:0.2px #383838;">Depreciation &amp; Amortization Expense</div>
<div class="t" style="left:648.5px;width:90px;text-align:right;top:437.6px;font-size:16.6px;line-height:16.6px;transform:scaleX(1.0450);transform-origin:right center;color:#d8484a;-webkit-text-stroke:0.2px #d8484a;">(37,987)</div>
<div class="t" style="left:744.5px;width:90px;text-align:right;top:437.6px;font-size:16.6px;line-height:16.6px;transform:scaleX(1.0450);transform-origin:right center;color:#d8484a;-webkit-text-stroke:0.2px #d8484a;">(47,301)</div>
<div class="t" style="left:840.6px;width:90px;text-align:right;top:437.6px;font-size:16.6px;line-height:16.6px;transform:scaleX(1.0450);transform-origin:right center;color:#d8484a;-webkit-text-stroke:0.2px #d8484a;">(47,296)</div>
<div class="t" style="left:936.7px;width:90px;text-align:right;top:437.6px;font-size:16.6px;line-height:16.6px;transform:scaleX(1.0450);transform-origin:right center;color:#d8484a;-webkit-text-stroke:0.2px #d8484a;">(49,175)</div>
<div class="t" style="left:1032.7px;width:90px;text-align:right;top:437.6px;font-size:16.6px;line-height:16.6px;transform:scaleX(1.0450);transform-origin:right center;color:#d8484a;-webkit-text-stroke:0.2px #d8484a;">(31,534)</div>
<div class="t" style="left:1128.8px;width:90px;text-align:right;top:437.6px;font-size:16.6px;line-height:16.6px;transform:scaleX(1.0450);transform-origin:right center;color:#d8484a;-webkit-text-stroke:0.2px #d8484a;">(36,020)</div>
<div class="t" style="left:1224.8px;width:90px;text-align:right;top:437.6px;font-size:16.6px;line-height:16.6px;transform:scaleX(1.0450);transform-origin:right center;color:#d8484a;-webkit-text-stroke:0.2px #d8484a;">(41,040)</div>
<div class="t" style="left:1320.8px;width:90px;text-align:right;top:437.6px;font-size:16.6px;line-height:16.6px;transform:scaleX(1.0450);transform-origin:right center;color:#d8484a;-webkit-text-stroke:0.2px #d8484a;">(36,939)</div>
<div class="t" style="left:1416.9px;width:90px;text-align:right;top:437.6px;font-size:16.6px;line-height:16.6px;transform:scaleX(1.0450);transform-origin:right center;color:#d8484a;-webkit-text-stroke:0.2px #d8484a;">(38,580)</div>
<div class="t" style="left:1512.9px;width:90px;text-align:right;top:437.6px;font-size:16.6px;line-height:16.6px;transform:scaleX(1.0450);transform-origin:right center;color:#d8484a;-webkit-text-stroke:0.2px #d8484a;">(53,097)</div>
<div class="t" style="left:1609.0px;width:90px;text-align:right;top:437.6px;font-size:16.6px;line-height:16.6px;transform:scaleX(1.0450);transform-origin:right center;color:#d8484a;-webkit-text-stroke:0.2px #d8484a;">(49,184)</div>
<div class="t" style="left:1705.0px;width:90px;text-align:right;top:437.6px;font-size:16.6px;line-height:16.6px;transform:scaleX(1.0450);transform-origin:right center;color:#d8484a;-webkit-text-stroke:0.2px #d8484a;">(44,067)</div>
<div class="t" style="left:1801.1px;width:90px;text-align:right;top:437.6px;font-size:16.6px;line-height:16.6px;transform:scaleX(1.0450);transform-origin:right center;color:#d8484a;-webkit-text-stroke:0.2px #d8484a;">(38,150)</div>
<div class="t" style="left:198.0px;top:462.6px;font-size:16.6px;line-height:16.6px;transform:scaleX(0.9990);transform-origin:left center;color:#383838;letter-spacing:0.3px;-webkit-text-stroke:0.2px #383838;">Other Current Assets</div>
<div class="t" style="left:648.5px;width:90px;text-align:right;top:462.6px;font-size:16.6px;line-height:16.6px;transform:scaleX(1.0450);transform-origin:right center;color:#d8484a;-webkit-text-stroke:0.2px #d8484a;">(731)</div>
<div class="t" style="left:744.5px;width:90px;text-align:right;top:462.6px;font-size:16.6px;line-height:16.6px;transform:scaleX(1.0450);transform-origin:right center;color:#d8484a;-webkit-text-stroke:0.2px #d8484a;">(819)</div>
<div class="t" style="left:840.6px;width:90px;text-align:right;top:462.6px;font-size:16.6px;line-height:16.6px;transform:scaleX(1.0450);transform-origin:right center;color:#d8484a;-webkit-text-stroke:0.2px #d8484a;">(766)</div>
<div class="t" style="left:936.7px;width:90px;text-align:right;top:462.6px;font-size:16.6px;line-height:16.6px;transform:scaleX(1.0450);transform-origin:right center;color:#d8484a;-webkit-text-stroke:0.2px #d8484a;">(784)</div>
<div class="t" style="left:1032.7px;width:90px;text-align:right;top:462.6px;font-size:16.6px;line-height:16.6px;transform:scaleX(1.0450);transform-origin:right center;color:#d8484a;-webkit-text-stroke:0.2px #d8484a;">(615)</div>
<div class="t" style="left:1128.8px;width:90px;text-align:right;top:462.6px;font-size:16.6px;line-height:16.6px;transform:scaleX(1.0450);transform-origin:right center;color:#d8484a;-webkit-text-stroke:0.2px #d8484a;">(662)</div>
<div class="t" style="left:1224.8px;width:90px;text-align:right;top:462.6px;font-size:16.6px;line-height:16.6px;transform:scaleX(1.0450);transform-origin:right center;color:#d8484a;-webkit-text-stroke:0.2px #d8484a;">(747)</div>
<div class="t" style="left:1320.8px;width:90px;text-align:right;top:462.6px;font-size:16.6px;line-height:16.6px;transform:scaleX(1.0450);transform-origin:right center;color:#d8484a;-webkit-text-stroke:0.2px #d8484a;">(617)</div>
<div class="t" style="left:1416.9px;width:90px;text-align:right;top:462.6px;font-size:16.6px;line-height:16.6px;transform:scaleX(1.0450);transform-origin:right center;color:#d8484a;-webkit-text-stroke:0.2px #d8484a;">(749)</div>
<div class="t" style="left:1512.9px;width:90px;text-align:right;top:462.6px;font-size:16.6px;line-height:16.6px;transform:scaleX(1.0450);transform-origin:right center;color:#d8484a;-webkit-text-stroke:0.2px #d8484a;">(935)</div>
<div class="t" style="left:1609.0px;width:90px;text-align:right;top:462.6px;font-size:16.6px;line-height:16.6px;transform:scaleX(1.0450);transform-origin:right center;color:#d8484a;-webkit-text-stroke:0.2px #d8484a;">(922)</div>
<div class="t" style="left:1705.0px;width:90px;text-align:right;top:462.6px;font-size:16.6px;line-height:16.6px;transform:scaleX(1.0450);transform-origin:right center;color:#d8484a;-webkit-text-stroke:0.2px #d8484a;">(790)</div>
<div class="t" style="left:1801.1px;width:90px;text-align:right;top:462.6px;font-size:16.6px;line-height:16.6px;transform:scaleX(1.0450);transform-origin:right center;color:#d8484a;-webkit-text-stroke:0.2px #d8484a;">(696)</div>
<div class="t" style="left:198.0px;top:488.9px;font-size:16.6px;line-height:16.6px;transform:scaleX(0.9990);transform-origin:left center;color:#383838;letter-spacing:0.3px;-webkit-text-stroke:0.2px #383838;">Non-Current Assets</div>
<div class="t" style="left:648.5px;width:90px;text-align:right;top:488.9px;font-size:16.6px;line-height:16.6px;transform:scaleX(1.0450);transform-origin:right center;color:#d8484a;-webkit-text-stroke:0.2px #d8484a;">(4,630)</div>
<div class="t" style="left:744.5px;width:90px;text-align:right;top:488.9px;font-size:16.6px;line-height:16.6px;transform:scaleX(1.0450);transform-origin:right center;color:#d8484a;-webkit-text-stroke:0.2px #d8484a;">(5,738)</div>
<div class="t" style="left:840.6px;width:90px;text-align:right;top:488.9px;font-size:16.6px;line-height:16.6px;transform:scaleX(1.0450);transform-origin:right center;color:#d8484a;-webkit-text-stroke:0.2px #d8484a;">(5,245)</div>
<div class="t" style="left:936.7px;width:90px;text-align:right;top:488.9px;font-size:16.6px;line-height:16.6px;transform:scaleX(1.0450);transform-origin:right center;color:#d8484a;-webkit-text-stroke:0.2px #d8484a;">(5,265)</div>
<div class="t" style="left:1032.7px;width:90px;text-align:right;top:488.9px;font-size:16.6px;line-height:16.6px;transform:scaleX(1.0450);transform-origin:right center;color:#d8484a;-webkit-text-stroke:0.2px #d8484a;">(3,746)</div>
<div class="t" style="left:1128.8px;width:90px;text-align:right;top:488.9px;font-size:16.6px;line-height:16.6px;transform:scaleX(1.0450);transform-origin:right center;color:#d8484a;-webkit-text-stroke:0.2px #d8484a;">(4,173)</div>
<div class="t" style="left:1224.8px;width:90px;text-align:right;top:488.9px;font-size:16.6px;line-height:16.6px;transform:scaleX(1.0450);transform-origin:right center;color:#d8484a;-webkit-text-stroke:0.2px #d8484a;">(4,614)</div>
<div class="t" style="left:1320.8px;width:90px;text-align:right;top:488.9px;font-size:16.6px;line-height:16.6px;transform:scaleX(1.0450);transform-origin:right center;color:#d8484a;-webkit-text-stroke:0.2px #d8484a;">(4,212)</div>
<div class="t" style="left:1416.9px;width:90px;text-align:right;top:488.9px;font-size:16.6px;line-height:16.6px;transform:scaleX(1.0450);transform-origin:right center;color:#d8484a;-webkit-text-stroke:0.2px #d8484a;">(4,759)</div>
<div class="t" style="left:1512.9px;width:90px;text-align:right;top:488.9px;font-size:16.6px;line-height:16.6px;transform:scaleX(1.0450);transform-origin:right center;color:#d8484a;-webkit-text-stroke:0.2px #d8484a;">(6,059)</div>
<div class="t" style="left:1609.0px;width:90px;text-align:right;top:488.9px;font-size:16.6px;line-height:16.6px;transform:scaleX(1.0450);transform-origin:right center;color:#d8484a;-webkit-text-stroke:0.2px #d8484a;">(5,332)</div>
<div class="t" style="left:1705.0px;width:90px;text-align:right;top:488.9px;font-size:16.6px;line-height:16.6px;transform:scaleX(1.0450);transform-origin:right center;color:#d8484a;-webkit-text-stroke:0.2px #d8484a;">(5,006)</div>
<div class="t" style="left:1801.1px;width:90px;text-align:right;top:488.9px;font-size:16.6px;line-height:16.6px;transform:scaleX(1.0450);transform-origin:right center;color:#d8484a;-webkit-text-stroke:0.2px #d8484a;">(4,487)</div>
<div class="t" style="left:198.0px;top:514.1px;font-size:16.6px;line-height:16.6px;transform:scaleX(0.9660);transform-origin:left center;color:#383838;letter-spacing:0.3px;-webkit-text-stroke:0.2px #383838;">Accounts Receivable</div>
<div class="t" style="left:648.5px;width:90px;text-align:right;top:514.1px;font-size:16.6px;line-height:16.6px;transform:scaleX(1.0450);transform-origin:right center;color:#d8484a;-webkit-text-stroke:0.2px #d8484a;">(1,857)</div>
<div class="t" style="left:744.5px;width:90px;text-align:right;top:514.1px;font-size:16.6px;line-height:16.6px;transform:scaleX(1.0450);transform-origin:right center;color:#d8484a;-webkit-text-stroke:0.2px #d8484a;">(2,434)</div>
<div class="t" style="left:840.6px;width:90px;text-align:right;top:514.1px;font-size:16.6px;line-height:16.6px;transform:scaleX(1.0450);transform-origin:right center;color:#d8484a;-webkit-text-stroke:0.2px #d8484a;">(2,471)</div>
<div class="t" style="left:936.7px;width:90px;text-align:right;top:514.1px;font-size:16.6px;line-height:16.6px;transform:scaleX(1.0450);transform-origin:right center;color:#d8484a;-webkit-text-stroke:0.2px #d8484a;">(2,134)</div>
<div class="t" style="left:1032.7px;width:90px;text-align:right;top:514.1px;font-size:16.6px;line-height:16.6px;transform:scaleX(1.0450);transform-origin:right center;color:#d8484a;-webkit-text-stroke:0.2px #d8484a;">(1,517)</div>
<div class="t" style="left:1128.8px;width:90px;text-align:right;top:514.1px;font-size:16.6px;line-height:16.6px;transform:scaleX(1.0450);transform-origin:right center;color:#d8484a;-webkit-text-stroke:0.2px #d8484a;">(1,835)</div>
<div class="t" style="left:1224.8px;width:90px;text-align:right;top:514.1px;font-size:16.6px;line-height:16.6px;transform:scaleX(1.0450);transform-origin:right center;color:#d8484a;-webkit-text-stroke:0.2px #d8484a;">(2,148)</div>
<div class="t" style="left:1320.8px;width:90px;text-align:right;top:514.1px;font-size:16.6px;line-height:16.6px;transform:scaleX(1.0450);transform-origin:right center;color:#d8484a;-webkit-text-stroke:0.2px #d8484a;">(1,884)</div>
<div class="t" style="left:1416.9px;width:90px;text-align:right;top:514.1px;font-size:16.6px;line-height:16.6px;transform:scaleX(1.0450);transform-origin:right center;color:#d8484a;-webkit-text-stroke:0.2px #d8484a;">(1,720)</div>
<div class="t" style="left:1512.9px;width:90px;text-align:right;top:514.1px;font-size:16.6px;line-height:16.6px;transform:scaleX(1.0450);transform-origin:right center;color:#d8484a;-webkit-text-stroke:0.2px #d8484a;">(2,617)</div>
<div class="t" style="left:1609.0px;width:90px;text-align:right;top:514.1px;font-size:16.6px;line-height:16.6px;transform:scaleX(1.0450);transform-origin:right center;color:#d8484a;-webkit-text-stroke:0.2px #d8484a;">(2,130)</div>
<div class="t" style="left:1705.0px;width:90px;text-align:right;top:514.1px;font-size:16.6px;line-height:16.6px;transform:scaleX(1.0450);transform-origin:right center;color:#d8484a;-webkit-text-stroke:0.2px #d8484a;">(2,044)</div>
<div class="t" style="left:1801.1px;width:90px;text-align:right;top:514.1px;font-size:16.6px;line-height:16.6px;transform:scaleX(1.0450);transform-origin:right center;color:#d8484a;-webkit-text-stroke:0.2px #d8484a;">(1,798)</div>
<div class="t" style="left:198.0px;top:539.2px;font-size:16.6px;line-height:16.6px;transform:scaleX(0.9630);transform-origin:left center;color:#383838;letter-spacing:0.3px;-webkit-text-stroke:0.2px #383838;">Accounts Payable</div>
<div class="t" style="left:644.0px;width:90px;text-align:right;top:539.2px;font-size:16.6px;line-height:16.6px;transform:scaleX(1.0450);transform-origin:right center;color:#333;-webkit-text-stroke:0.2px #333;">2,029</div>
<div class="t" style="left:740.0px;width:90px;text-align:right;top:539.2px;font-size:16.6px;line-height:16.6px;transform:scaleX(1.0450);transform-origin:right center;color:#333;-webkit-text-stroke:0.2px #333;">2,239</div>
<div class="t" style="left:836.1px;width:90px;text-align:right;top:539.2px;font-size:16.6px;line-height:16.6px;transform:scaleX(1.0450);transform-origin:right center;color:#333;-webkit-text-stroke:0.2px #333;">2,234</div>
<div class="t" style="left:932.1px;width:90px;text-align:right;top:539.2px;font-size:16.6px;line-height:16.6px;transform:scaleX(1.0450);transform-origin:right center;color:#333;-webkit-text-stroke:0.2px #333;">2,606</div>
<div class="t" style="left:1028.2px;width:90px;text-align:right;top:539.2px;font-size:16.6px;line-height:16.6px;transform:scaleX(1.0450);transform-origin:right center;color:#333;-webkit-text-stroke:0.2px #333;">1,658</div>
<div class="t" style="left:1124.2px;width:90px;text-align:right;top:539.2px;font-size:16.6px;line-height:16.6px;transform:scaleX(1.0450);transform-origin:right center;color:#333;-webkit-text-stroke:0.2px #333;">1,672</div>
<div class="t" style="left:1220.3px;width:90px;text-align:right;top:539.2px;font-size:16.6px;line-height:16.6px;transform:scaleX(1.0450);transform-origin:right center;color:#333;-webkit-text-stroke:0.2px #333;">2,280</div>
<div class="t" style="left:1316.3px;width:90px;text-align:right;top:539.2px;font-size:16.6px;line-height:16.6px;transform:scaleX(1.0450);transform-origin:right center;color:#333;-webkit-text-stroke:0.2px #333;">2,058</div>
<div class="t" style="left:1412.4px;width:90px;text-align:right;top:539.2px;font-size:16.6px;line-height:16.6px;transform:scaleX(1.0450);transform-origin:right center;color:#333;-webkit-text-stroke:0.2px #333;">2,120</div>
<div class="t" style="left:1508.4px;width:90px;text-align:right;top:539.2px;font-size:16.6px;line-height:16.6px;transform:scaleX(1.0450);transform-origin:right center;color:#333;-webkit-text-stroke:0.2px #333;">2,723</div>
<div class="t" style="left:1604.5px;width:90px;text-align:right;top:539.2px;font-size:16.6px;line-height:16.6px;transform:scaleX(1.0450);transform-origin:right center;color:#333;-webkit-text-stroke:0.2px #333;">2,609</div>
<div class="t" style="left:1700.5px;width:90px;text-align:right;top:539.2px;font-size:16.6px;line-height:16.6px;transform:scaleX(1.0450);transform-origin:right center;color:#333;-webkit-text-stroke:0.2px #333;">2,415</div>
<div class="t" style="left:1796.6px;width:90px;text-align:right;top:539.2px;font-size:16.6px;line-height:16.6px;transform:scaleX(1.0450);transform-origin:right center;color:#333;-webkit-text-stroke:0.2px #333;">2,167</div>
<div class="t" style="left:198.0px;top:565.3px;font-size:16.6px;line-height:16.6px;transform:scaleX(0.9610);transform-origin:left center;color:#383838;letter-spacing:0.3px;-webkit-text-stroke:0.2px #383838;">Prepaid Expenses</div>
<div class="t" style="left:648.5px;width:90px;text-align:right;top:565.3px;font-size:16.6px;line-height:16.6px;transform:scaleX(1.0450);transform-origin:right center;color:#d8484a;-webkit-text-stroke:0.2px #d8484a;">(926)</div>
<div class="t" style="left:744.5px;width:90px;text-align:right;top:565.3px;font-size:16.6px;line-height:16.6px;transform:scaleX(1.0450);transform-origin:right center;color:#d8484a;-webkit-text-stroke:0.2px #d8484a;">(1,000)</div>
<div class="t" style="left:840.6px;width:90px;text-align:right;top:565.3px;font-size:16.6px;line-height:16.6px;transform:scaleX(1.0450);transform-origin:right center;color:#d8484a;-webkit-text-stroke:0.2px #d8484a;">(1,100)</div>
<div class="t" style="left:936.7px;width:90px;text-align:right;top:565.3px;font-size:16.6px;line-height:16.6px;transform:scaleX(1.0450);transform-origin:right center;color:#d8484a;-webkit-text-stroke:0.2px #d8484a;">(1,051)</div>
<div class="t" style="left:1032.7px;width:90px;text-align:right;top:565.3px;font-size:16.6px;line-height:16.6px;transform:scaleX(1.0450);transform-origin:right center;color:#d8484a;-webkit-text-stroke:0.2px #d8484a;">(625)</div>
<div class="t" style="left:1128.8px;width:90px;text-align:right;top:565.3px;font-size:16.6px;line-height:16.6px;transform:scaleX(1.0450);transform-origin:right center;color:#d8484a;-webkit-text-stroke:0.2px #d8484a;">(747)</div>
<div class="t" style="left:1224.8px;width:90px;text-align:right;top:565.3px;font-size:16.6px;line-height:16.6px;transform:scaleX(1.0450);transform-origin:right center;color:#d8484a;-webkit-text-stroke:0.2px #d8484a;">(921)</div>
<div class="t" style="left:1320.8px;width:90px;text-align:right;top:565.3px;font-size:16.6px;line-height:16.6px;transform:scaleX(1.0450);transform-origin:right center;color:#d8484a;-webkit-text-stroke:0.2px #d8484a;">(796)</div>
<div class="t" style="left:1416.9px;width:90px;text-align:right;top:565.3px;font-size:16.6px;line-height:16.6px;transform:scaleX(1.0450);transform-origin:right center;color:#d8484a;-webkit-text-stroke:0.2px #d8484a;">(822)</div>
<div class="t" style="left:1512.9px;width:90px;text-align:right;top:565.3px;font-size:16.6px;line-height:16.6px;transform:scaleX(1.0450);transform-origin:right center;color:#d8484a;-webkit-text-stroke:0.2px #d8484a;">(1,141)</div>
<div class="t" style="left:1609.0px;width:90px;text-align:right;top:565.3px;font-size:16.6px;line-height:16.6px;transform:scaleX(1.0450);transform-origin:right center;color:#d8484a;-webkit-text-stroke:0.2px #d8484a;">(1,136)</div>
<div class="t" style="left:1705.0px;width:90px;text-align:right;top:565.3px;font-size:16.6px;line-height:16.6px;transform:scaleX(1.0450);transform-origin:right center;color:#d8484a;-webkit-text-stroke:0.2px #d8484a;">(908)</div>
<div class="t" style="left:1801.1px;width:90px;text-align:right;top:565.3px;font-size:16.6px;line-height:16.6px;transform:scaleX(1.0450);transform-origin:right center;color:#d8484a;-webkit-text-stroke:0.2px #d8484a;">(858)</div>
<div class="t" style="left:189.5px;top:590.1px;font-size:16.16px;line-height:16.16px;transform:scaleX(1.0050);transform-origin:left center;color:#1e1e1e;font-weight:700;">Net Cash Provided by Operating Activities</div>
<div class="t" style="left:643.5px;width:90px;text-align:right;top:589.7px;font-size:16.6px;line-height:16.6px;color:#111;font-weight:700;">44,503</div>
<div class="t" style="left:744.0px;width:90px;text-align:right;top:589.7px;font-size:16.6px;line-height:16.6px;color:#c8202c;font-weight:700;">(101,388)</div>
<div class="t" style="left:835.6px;width:90px;text-align:right;top:589.7px;font-size:16.6px;line-height:16.6px;color:#111;font-weight:700;">3,271</div>
<div class="t" style="left:931.6px;width:90px;text-align:right;top:589.7px;font-size:16.6px;line-height:16.6px;color:#111;font-weight:700;">36,328</div>
<div class="t" style="left:1027.7px;width:90px;text-align:right;top:589.7px;font-size:16.6px;line-height:16.6px;color:#111;font-weight:700;">46,402</div>
<div class="t" style="left:1123.8px;width:90px;text-align:right;top:589.7px;font-size:16.6px;line-height:16.6px;color:#111;font-weight:700;">14,758</div>
<div class="t" style="left:1224.3px;width:90px;text-align:right;top:589.7px;font-size:16.6px;line-height:16.6px;color:#c8202c;font-weight:700;">(94,456)</div>
<div class="t" style="left:1320.3px;width:90px;text-align:right;top:589.7px;font-size:16.6px;line-height:16.6px;color:#c8202c;font-weight:700;">(38,471)</div>
<div class="t" style="left:1411.9px;width:90px;text-align:right;top:589.7px;font-size:16.6px;line-height:16.6px;color:#111;font-weight:700;">27,123</div>
<div class="t" style="left:1507.9px;width:90px;text-align:right;top:589.7px;font-size:16.6px;line-height:16.6px;color:#111;font-weight:700;">80,240</div>
<div class="t" style="left:1608.5px;width:90px;text-align:right;top:589.7px;font-size:16.6px;line-height:16.6px;color:#c8202c;font-weight:700;">(94,525)</div>
<div class="t" style="left:1704.5px;width:90px;text-align:right;top:589.7px;font-size:16.6px;line-height:16.6px;color:#c8202c;font-weight:700;">(47,273)</div>
<div class="t" style="left:1800.6px;width:90px;text-align:right;top:589.7px;font-size:16.6px;line-height:16.6px;color:#c8202c;font-weight:700;">(105,378)</div>
<div class="t" style="left:189.5px;top:639.2px;font-size:16.16px;line-height:16.16px;transform:scaleX(0.9940);transform-origin:left center;color:#1e1e1e;font-weight:700;">Cash Flows from Investing Activities</div>
<div class="t" style="left:198.0px;top:666.0px;font-size:16.6px;line-height:16.6px;transform:scaleX(0.9910);transform-origin:left center;color:#383838;letter-spacing:0.3px;-webkit-text-stroke:0.2px #383838;">Purchase of Property, Plant, and Equipment</div>
<div class="t" style="left:648.5px;width:90px;text-align:right;top:666.0px;font-size:16.6px;line-height:16.6px;transform:scaleX(1.0450);transform-origin:right center;color:#d8484a;-webkit-text-stroke:0.2px #d8484a;">(14,194)</div>
<div class="t" style="left:744.5px;width:90px;text-align:right;top:666.0px;font-size:16.6px;line-height:16.6px;transform:scaleX(1.0450);transform-origin:right center;color:#d8484a;-webkit-text-stroke:0.2px #d8484a;">(17,993)</div>
<div class="t" style="left:840.6px;width:90px;text-align:right;top:666.0px;font-size:16.6px;line-height:16.6px;transform:scaleX(1.0450);transform-origin:right center;color:#d8484a;-webkit-text-stroke:0.2px #d8484a;">(16,478)</div>
<div class="t" style="left:936.7px;width:90px;text-align:right;top:666.0px;font-size:16.6px;line-height:16.6px;transform:scaleX(1.0450);transform-origin:right center;color:#d8484a;-webkit-text-stroke:0.2px #d8484a;">(17,884)</div>
<div class="t" style="left:1032.7px;width:90px;text-align:right;top:666.0px;font-size:16.6px;line-height:16.6px;transform:scaleX(1.0450);transform-origin:right center;color:#d8484a;-webkit-text-stroke:0.2px #d8484a;">(11,148)</div>
<div class="t" style="left:1128.8px;width:90px;text-align:right;top:666.0px;font-size:16.6px;line-height:16.6px;transform:scaleX(1.0450);transform-origin:right center;color:#d8484a;-webkit-text-stroke:0.2px #d8484a;">(12,838)</div>
<div class="t" style="left:1224.8px;width:90px;text-align:right;top:666.0px;font-size:16.6px;line-height:16.6px;transform:scaleX(1.0450);transform-origin:right center;color:#d8484a;-webkit-text-stroke:0.2px #d8484a;">(14,786)</div>
<div class="t" style="left:1320.8px;width:90px;text-align:right;top:666.0px;font-size:16.6px;line-height:16.6px;transform:scaleX(1.0450);transform-origin:right center;color:#d8484a;-webkit-text-stroke:0.2px #d8484a;">(14,574)</div>
<div class="t" style="left:1416.9px;width:90px;text-align:right;top:666.0px;font-size:16.6px;line-height:16.6px;transform:scaleX(1.0450);transform-origin:right center;color:#d8484a;-webkit-text-stroke:0.2px #d8484a;">(14,206)</div>
<div class="t" style="left:1512.9px;width:90px;text-align:right;top:666.0px;font-size:16.6px;line-height:16.6px;transform:scaleX(1.0450);transform-origin:right center;color:#d8484a;-webkit-text-stroke:0.2px #d8484a;">(19,579)</div>
<div class="t" style="left:1609.0px;width:90px;text-align:right;top:666.0px;font-size:16.6px;line-height:16.6px;transform:scaleX(1.0450);transform-origin:right center;color:#d8484a;-webkit-text-stroke:0.2px #d8484a;">(17,963)</div>
<div class="t" style="left:1705.0px;width:90px;text-align:right;top:666.0px;font-size:16.6px;line-height:16.6px;transform:scaleX(1.0450);transform-origin:right center;color:#d8484a;-webkit-text-stroke:0.2px #d8484a;">(15,843)</div>
<div class="t" style="left:1801.1px;width:90px;text-align:right;top:666.0px;font-size:16.6px;line-height:16.6px;transform:scaleX(1.0450);transform-origin:right center;color:#d8484a;-webkit-text-stroke:0.2px #d8484a;">(13,234)</div>
<div class="t" style="left:198.0px;top:691.0px;font-size:16.6px;line-height:16.6px;transform:scaleX(1.0100);transform-origin:left center;color:#383838;letter-spacing:0.3px;-webkit-text-stroke:0.2px #383838;">Accumulated Depreciation</div>
<div class="t" style="left:644.0px;width:90px;text-align:right;top:691.0px;font-size:16.6px;line-height:16.6px;transform:scaleX(1.0450);transform-origin:right center;color:#333;-webkit-text-stroke:0.2px #333;">42,387</div>
<div class="t" style="left:740.0px;width:90px;text-align:right;top:691.0px;font-size:16.6px;line-height:16.6px;transform:scaleX(1.0450);transform-origin:right center;color:#333;-webkit-text-stroke:0.2px #333;">52,830</div>
<div class="t" style="left:836.1px;width:90px;text-align:right;top:691.0px;font-size:16.6px;line-height:16.6px;transform:scaleX(1.0450);transform-origin:right center;color:#333;-webkit-text-stroke:0.2px #333;">53,487</div>
<div class="t" style="left:932.1px;width:90px;text-align:right;top:691.0px;font-size:16.6px;line-height:16.6px;transform:scaleX(1.0450);transform-origin:right center;color:#333;-webkit-text-stroke:0.2px #333;">54,828</div>
<div class="t" style="left:1028.2px;width:90px;text-align:right;top:691.0px;font-size:16.6px;line-height:16.6px;transform:scaleX(1.0450);transform-origin:right center;color:#333;-webkit-text-stroke:0.2px #333;">35,378</div>
<div class="t" style="left:1124.2px;width:90px;text-align:right;top:691.0px;font-size:16.6px;line-height:16.6px;transform:scaleX(1.0450);transform-origin:right center;color:#333;-webkit-text-stroke:0.2px #333;">40,682</div>
<div class="t" style="left:1220.3px;width:90px;text-align:right;top:691.0px;font-size:16.6px;line-height:16.6px;transform:scaleX(1.0450);transform-origin:right center;color:#333;-webkit-text-stroke:0.2px #333;">45,923</div>
<div class="t" style="left:1316.3px;width:90px;text-align:right;top:691.0px;font-size:16.6px;line-height:16.6px;transform:scaleX(1.0450);transform-origin:right center;color:#333;-webkit-text-stroke:0.2px #333;">41,639</div>
<div class="t" style="left:1412.4px;width:90px;text-align:right;top:691.0px;font-size:16.6px;line-height:16.6px;transform:scaleX(1.0450);transform-origin:right center;color:#333;-webkit-text-stroke:0.2px #333;">43,004</div>
<div class="t" style="left:1508.4px;width:90px;text-align:right;top:691.0px;font-size:16.6px;line-height:16.6px;transform:scaleX(1.0450);transform-origin:right center;color:#333;-webkit-text-stroke:0.2px #333;">59,425</div>
<div class="t" style="left:1604.5px;width:90px;text-align:right;top:691.0px;font-size:16.6px;line-height:16.6px;transform:scaleX(1.0450);transform-origin:right center;color:#333;-webkit-text-stroke:0.2px #333;">55,345</div>
<div class="t" style="left:1700.5px;width:90px;text-align:right;top:691.0px;font-size:16.6px;line-height:16.6px;transform:scaleX(1.0450);transform-origin:right center;color:#333;-webkit-text-stroke:0.2px #333;">49,792</div>
<div class="t" style="left:1796.6px;width:90px;text-align:right;top:691.0px;font-size:16.6px;line-height:16.6px;transform:scaleX(1.0450);transform-origin:right center;color:#333;-webkit-text-stroke:0.2px #333;">42,944</div>
<div class="t" style="left:189.5px;top:715.4px;font-size:16.16px;line-height:16.16px;transform:scaleX(1.0050);transform-origin:left center;color:#1e1e1e;font-weight:700;">Net Cash from Investing Activities</div>
<div class="t" style="left:643.5px;width:90px;text-align:right;top:715.0px;font-size:16.6px;line-height:16.6px;color:#111;font-weight:700;">28,194</div>
<div class="t" style="left:739.5px;width:90px;text-align:right;top:715.0px;font-size:16.6px;line-height:16.6px;color:#111;font-weight:700;">34,837</div>
<div class="t" style="left:835.6px;width:90px;text-align:right;top:715.0px;font-size:16.6px;line-height:16.6px;color:#111;font-weight:700;">37,009</div>
<div class="t" style="left:931.6px;width:90px;text-align:right;top:715.0px;font-size:16.6px;line-height:16.6px;color:#111;font-weight:700;">36,944</div>
<div class="t" style="left:1027.7px;width:90px;text-align:right;top:715.0px;font-size:16.6px;line-height:16.6px;color:#111;font-weight:700;">24,229</div>
<div class="t" style="left:1123.8px;width:90px;text-align:right;top:715.0px;font-size:16.6px;line-height:16.6px;color:#111;font-weight:700;">27,844</div>
<div class="t" style="left:1219.8px;width:90px;text-align:right;top:715.0px;font-size:16.6px;line-height:16.6px;color:#111;font-weight:700;">31,137</div>
<div class="t" style="left:1315.8px;width:90px;text-align:right;top:715.0px;font-size:16.6px;line-height:16.6px;color:#111;font-weight:700;">27,065</div>
<div class="t" style="left:1411.9px;width:90px;text-align:right;top:715.0px;font-size:16.6px;line-height:16.6px;color:#111;font-weight:700;">28,798</div>
<div class="t" style="left:1507.9px;width:90px;text-align:right;top:715.0px;font-size:16.6px;line-height:16.6px;color:#111;font-weight:700;">39,846</div>
<div class="t" style="left:1604.0px;width:90px;text-align:right;top:715.0px;font-size:16.6px;line-height:16.6px;color:#111;font-weight:700;">37,382</div>
<div class="t" style="left:1700.0px;width:90px;text-align:right;top:715.0px;font-size:16.6px;line-height:16.6px;color:#111;font-weight:700;">33,949</div>
<div class="t" style="left:1796.1px;width:90px;text-align:right;top:715.0px;font-size:16.6px;line-height:16.6px;color:#111;font-weight:700;">29,710</div>
<div class="t" style="left:189.5px;top:765.2px;font-size:16.16px;line-height:16.16px;transform:scaleX(0.9860);transform-origin:left center;color:#1e1e1e;font-weight:700;">Cash Flows from Financing Activities</div>
<div class="t" style="left:198.0px;top:792.2px;font-size:16.6px;line-height:16.6px;transform:scaleX(0.9830);transform-origin:left center;color:#383838;letter-spacing:0.3px;-webkit-text-stroke:0.2px #383838;">Proceeds from Loans</div>
<div class="t" style="left:644.0px;width:90px;text-align:right;top:792.2px;font-size:16.6px;line-height:16.6px;transform:scaleX(1.0450);transform-origin:right center;color:#333;-webkit-text-stroke:0.2px #333;">16,044</div>
<div class="t" style="left:740.0px;width:90px;text-align:right;top:792.2px;font-size:16.6px;line-height:16.6px;transform:scaleX(1.0450);transform-origin:right center;color:#333;-webkit-text-stroke:0.2px #333;">18,805</div>
<div class="t" style="left:836.1px;width:90px;text-align:right;top:792.2px;font-size:16.6px;line-height:16.6px;transform:scaleX(1.0450);transform-origin:right center;color:#333;-webkit-text-stroke:0.2px #333;">19,075</div>
<div class="t" style="left:932.1px;width:90px;text-align:right;top:792.2px;font-size:16.6px;line-height:16.6px;transform:scaleX(1.0450);transform-origin:right center;color:#333;-webkit-text-stroke:0.2px #333;">18,928</div>
<div class="t" style="left:1028.2px;width:90px;text-align:right;top:792.2px;font-size:16.6px;line-height:16.6px;transform:scaleX(1.0450);transform-origin:right center;color:#333;-webkit-text-stroke:0.2px #333;">13,341</div>
<div class="t" style="left:1124.2px;width:90px;text-align:right;top:792.2px;font-size:16.6px;line-height:16.6px;transform:scaleX(1.0450);transform-origin:right center;color:#333;-webkit-text-stroke:0.2px #333;">14,882</div>
<div class="t" style="left:1220.3px;width:90px;text-align:right;top:792.2px;font-size:16.6px;line-height:16.6px;transform:scaleX(1.0450);transform-origin:right center;color:#333;-webkit-text-stroke:0.2px #333;">16,235</div>
<div class="t" style="left:1316.3px;width:90px;text-align:right;top:792.2px;font-size:16.6px;line-height:16.6px;transform:scaleX(1.0450);transform-origin:right center;color:#333;-webkit-text-stroke:0.2px #333;">14,166</div>
<div class="t" style="left:1412.4px;width:90px;text-align:right;top:792.2px;font-size:16.6px;line-height:16.6px;transform:scaleX(1.0450);transform-origin:right center;color:#333;-webkit-text-stroke:0.2px #333;">16,611</div>
<div class="t" style="left:1508.4px;width:90px;text-align:right;top:792.2px;font-size:16.6px;line-height:16.6px;transform:scaleX(1.0450);transform-origin:right center;color:#333;-webkit-text-stroke:0.2px #333;">22,784</div>
<div class="t" style="left:1604.5px;width:90px;text-align:right;top:792.2px;font-size:16.6px;line-height:16.6px;transform:scaleX(1.0450);transform-origin:right center;color:#333;-webkit-text-stroke:0.2px #333;">18,419</div>
<div class="t" style="left:1700.5px;width:90px;text-align:right;top:792.2px;font-size:16.6px;line-height:16.6px;transform:scaleX(1.0450);transform-origin:right center;color:#333;-webkit-text-stroke:0.2px #333;">17,840</div>
<div class="t" style="left:1796.6px;width:90px;text-align:right;top:792.2px;font-size:16.6px;line-height:16.6px;transform:scaleX(1.0450);transform-origin:right center;color:#333;-webkit-text-stroke:0.2px #333;">16,674</div>
<div class="t" style="left:189.5px;top:816.7px;font-size:16.16px;line-height:16.16px;transform:scaleX(0.9950);transform-origin:left center;color:#1e1e1e;font-weight:700;">Net Cash from Financing Activities</div>
<div class="t" style="left:643.5px;width:90px;text-align:right;top:816.3px;font-size:16.6px;line-height:16.6px;color:#111;font-weight:700;">16,044</div>
<div class="t" style="left:739.5px;width:90px;text-align:right;top:816.3px;font-size:16.6px;line-height:16.6px;color:#111;font-weight:700;">18,805</div>
<div class="t" style="left:835.6px;width:90px;text-align:right;top:816.3px;font-size:16.6px;line-height:16.6px;color:#111;font-weight:700;">19,075</div>
<div class="t" style="left:931.6px;width:90px;text-align:right;top:816.3px;font-size:16.6px;line-height:16.6px;color:#111;font-weight:700;">18,928</div>
<div class="t" style="left:1027.7px;width:90px;text-align:right;top:816.3px;font-size:16.6px;line-height:16.6px;color:#111;font-weight:700;">13,341</div>
<div class="t" style="left:1123.8px;width:90px;text-align:right;top:816.3px;font-size:16.6px;line-height:16.6px;color:#111;font-weight:700;">14,882</div>
<div class="t" style="left:1219.8px;width:90px;text-align:right;top:816.3px;font-size:16.6px;line-height:16.6px;color:#111;font-weight:700;">16,235</div>
<div class="t" style="left:1315.8px;width:90px;text-align:right;top:816.3px;font-size:16.6px;line-height:16.6px;color:#111;font-weight:700;">14,166</div>
<div class="t" style="left:1411.9px;width:90px;text-align:right;top:816.3px;font-size:16.6px;line-height:16.6px;color:#111;font-weight:700;">16,611</div>
<div class="t" style="left:1507.9px;width:90px;text-align:right;top:816.3px;font-size:16.6px;line-height:16.6px;color:#111;font-weight:700;">22,784</div>
<div class="t" style="left:1604.0px;width:90px;text-align:right;top:816.3px;font-size:16.6px;line-height:16.6px;color:#111;font-weight:700;">18,419</div>
<div class="t" style="left:1700.0px;width:90px;text-align:right;top:816.3px;font-size:16.6px;line-height:16.6px;color:#111;font-weight:700;">17,840</div>
<div class="t" style="left:1796.1px;width:90px;text-align:right;top:816.3px;font-size:16.6px;line-height:16.6px;color:#111;font-weight:700;">16,674</div>
<div class="t" style="left:181.0px;top:866.4px;font-size:16.16px;line-height:16.16px;color:#1e1e1e;font-weight:700;">Net Increase in Cash</div>
<div class="t" style="left:643.5px;width:90px;text-align:right;top:866.0px;font-size:16.6px;line-height:16.6px;color:#111;font-weight:700;">88,741</div>
<div class="t" style="left:744.0px;width:90px;text-align:right;top:866.0px;font-size:16.6px;line-height:16.6px;color:#c8202c;font-weight:700;">(47,745)</div>
<div class="t" style="left:835.6px;width:90px;text-align:right;top:866.0px;font-size:16.6px;line-height:16.6px;color:#111;font-weight:700;">59,355</div>
<div class="t" style="left:931.6px;width:90px;text-align:right;top:866.0px;font-size:16.6px;line-height:16.6px;color:#111;font-weight:700;">92,200</div>
<div class="t" style="left:1027.7px;width:90px;text-align:right;top:866.0px;font-size:16.6px;line-height:16.6px;color:#111;font-weight:700;">83,972</div>
<div class="t" style="left:1123.8px;width:90px;text-align:right;top:866.0px;font-size:16.6px;line-height:16.6px;color:#111;font-weight:700;">57,483</div>
<div class="t" style="left:1224.3px;width:90px;text-align:right;top:866.0px;font-size:16.6px;line-height:16.6px;color:#c8202c;font-weight:700;">(47,083)</div>
<div class="t" style="left:1315.8px;width:90px;text-align:right;top:866.0px;font-size:16.6px;line-height:16.6px;color:#111;font-weight:700;">2,761</div>
<div class="t" style="left:1411.9px;width:90px;text-align:right;top:866.0px;font-size:16.6px;line-height:16.6px;color:#111;font-weight:700;">72,533</div>
<div class="t" style="left:1507.9px;width:90px;text-align:right;top:866.0px;font-size:16.6px;line-height:16.6px;color:#111;font-weight:700;">142,870</div>
<div class="t" style="left:1608.5px;width:90px;text-align:right;top:866.0px;font-size:16.6px;line-height:16.6px;color:#c8202c;font-weight:700;">(38,723)</div>
<div class="t" style="left:1700.0px;width:90px;text-align:right;top:866.0px;font-size:16.6px;line-height:16.6px;color:#111;font-weight:700;">4,517</div>
<div class="t" style="left:1800.6px;width:90px;text-align:right;top:866.0px;font-size:16.6px;line-height:16.6px;color:#c8202c;font-weight:700;">(58,994)</div>
<div class="t" style="left:181.0px;top:916.8px;font-size:16.6px;line-height:16.6px;transform:scaleX(0.9810);transform-origin:left center;color:#383838;letter-spacing:0.3px;-webkit-text-stroke:0.2px #383838;">Cash at Beginning of Period</div>
<div class="t" style="left:644.0px;width:90px;text-align:right;top:916.8px;font-size:16.6px;line-height:16.6px;transform:scaleX(1.0450);transform-origin:right center;color:#333;-webkit-text-stroke:0.2px #333;">941,942</div>
<div class="t" style="left:740.0px;width:90px;text-align:right;top:916.8px;font-size:16.6px;line-height:16.6px;transform:scaleX(1.0450);transform-origin:right center;color:#333;-webkit-text-stroke:0.2px #333;">993,837</div>
<div class="t" style="left:836.1px;width:90px;text-align:right;top:916.8px;font-size:16.6px;line-height:16.6px;transform:scaleX(1.0450);transform-origin:right center;color:#333;-webkit-text-stroke:0.2px #333;">939,433</div>
<div class="t" style="left:932.1px;width:90px;text-align:right;top:916.8px;font-size:16.6px;line-height:16.6px;transform:scaleX(1.0450);transform-origin:right center;color:#333;-webkit-text-stroke:0.2px #333;">852,108</div>
<div class="t" style="left:1028.2px;width:90px;text-align:right;top:916.8px;font-size:16.6px;line-height:16.6px;transform:scaleX(1.0450);transform-origin:right center;color:#333;-webkit-text-stroke:0.2px #333;">771,452</div>
<div class="t" style="left:1124.2px;width:90px;text-align:right;top:916.8px;font-size:16.6px;line-height:16.6px;transform:scaleX(1.0450);transform-origin:right center;color:#333;-webkit-text-stroke:0.2px #333;">717,510</div>
<div class="t" style="left:1220.3px;width:90px;text-align:right;top:916.8px;font-size:16.6px;line-height:16.6px;transform:scaleX(1.0450);transform-origin:right center;color:#333;-webkit-text-stroke:0.2px #333;">768,897</div>
<div class="t" style="left:1316.3px;width:90px;text-align:right;top:916.8px;font-size:16.6px;line-height:16.6px;transform:scaleX(1.0450);transform-origin:right center;color:#333;-webkit-text-stroke:0.2px #333;">769,583</div>
<div class="t" style="left:1412.4px;width:90px;text-align:right;top:916.8px;font-size:16.6px;line-height:16.6px;transform:scaleX(1.0450);transform-origin:right center;color:#333;-webkit-text-stroke:0.2px #333;">700,980</div>
<div class="t" style="left:1508.4px;width:90px;text-align:right;top:916.8px;font-size:16.6px;line-height:16.6px;transform:scaleX(1.0450);transform-origin:right center;color:#333;-webkit-text-stroke:0.2px #333;">563,257</div>
<div class="t" style="left:1604.5px;width:90px;text-align:right;top:916.8px;font-size:16.6px;line-height:16.6px;transform:scaleX(1.0450);transform-origin:right center;color:#333;-webkit-text-stroke:0.2px #333;">606,396</div>
<div class="t" style="left:1700.5px;width:90px;text-align:right;top:916.8px;font-size:16.6px;line-height:16.6px;transform:scaleX(1.0450);transform-origin:right center;color:#333;-webkit-text-stroke:0.2px #333;">606,231</div>
<div class="t" style="left:1796.6px;width:90px;text-align:right;top:916.8px;font-size:16.6px;line-height:16.6px;transform:scaleX(1.0450);transform-origin:right center;color:#333;-webkit-text-stroke:0.2px #333;">668,907</div>
<div class="t" style="left:181.0px;top:966.5px;font-size:16.16px;line-height:16.16px;transform:scaleX(0.9800);transform-origin:left center;color:#1e1e1e;font-weight:700;">Cash End of Period</div>
<div class="t" style="left:643.5px;width:90px;text-align:right;top:966.1px;font-size:16.6px;line-height:16.6px;color:#111;font-weight:700;">1,030,683</div>
<div class="t" style="left:739.5px;width:90px;text-align:right;top:966.1px;font-size:16.6px;line-height:16.6px;color:#111;font-weight:700;">946,091</div>
<div class="t" style="left:835.6px;width:90px;text-align:right;top:966.1px;font-size:16.6px;line-height:16.6px;color:#111;font-weight:700;">998,788</div>
<div class="t" style="left:931.6px;width:90px;text-align:right;top:966.1px;font-size:16.6px;line-height:16.6px;color:#111;font-weight:700;">944,308</div>
<div class="t" style="left:1027.7px;width:90px;text-align:right;top:966.1px;font-size:16.6px;line-height:16.6px;color:#111;font-weight:700;">855,424</div>
<div class="t" style="left:1123.8px;width:90px;text-align:right;top:966.1px;font-size:16.6px;line-height:16.6px;color:#111;font-weight:700;">774,993</div>
<div class="t" style="left:1219.8px;width:90px;text-align:right;top:966.1px;font-size:16.6px;line-height:16.6px;color:#111;font-weight:700;">721,814</div>
<div class="t" style="left:1315.8px;width:90px;text-align:right;top:966.1px;font-size:16.6px;line-height:16.6px;color:#111;font-weight:700;">772,344</div>
<div class="t" style="left:1411.9px;width:90px;text-align:right;top:966.1px;font-size:16.6px;line-height:16.6px;color:#111;font-weight:700;">773,513</div>
<div class="t" style="left:1507.9px;width:90px;text-align:right;top:966.1px;font-size:16.6px;line-height:16.6px;color:#111;font-weight:700;">706,127</div>
<div class="t" style="left:1604.0px;width:90px;text-align:right;top:966.1px;font-size:16.6px;line-height:16.6px;color:#111;font-weight:700;">567,673</div>
<div class="t" style="left:1700.0px;width:90px;text-align:right;top:966.1px;font-size:16.6px;line-height:16.6px;color:#111;font-weight:700;">610,747</div>
<div class="t" style="left:1796.1px;width:90px;text-align:right;top:966.1px;font-size:16.6px;line-height:16.6px;color:#111;font-weight:700;">609,912</div>
<div class="t" style="left:181.0px;top:1016.9px;font-size:14.4px;line-height:14.4px;transform:scaleX(1.0237);transform-origin:left center;color:#484848;letter-spacing:0.2px;">Check - Cash End of Period from Database</div>
<div class="t" style="left:644.5px;width:90px;text-align:right;top:1016.9px;font-size:14.4px;line-height:14.4px;transform:scaleX(1.0800);transform-origin:right center;color:#3a3a3a;">1,027,218</div>
<div class="t" style="left:740.5px;width:90px;text-align:right;top:1016.9px;font-size:14.4px;line-height:14.4px;transform:scaleX(1.0800);transform-origin:right center;color:#3a3a3a;">941,942</div>
<div class="t" style="left:836.6px;width:90px;text-align:right;top:1016.9px;font-size:14.4px;line-height:14.4px;transform:scaleX(1.0800);transform-origin:right center;color:#3a3a3a;">993,837</div>
<div class="t" style="left:932.6px;width:90px;text-align:right;top:1016.9px;font-size:14.4px;line-height:14.4px;transform:scaleX(1.0800);transform-origin:right center;color:#3a3a3a;">939,433</div>
<div class="t" style="left:1028.7px;width:90px;text-align:right;top:1016.9px;font-size:14.4px;line-height:14.4px;transform:scaleX(1.0800);transform-origin:right center;color:#3a3a3a;">852,108</div>
<div class="t" style="left:1124.8px;width:90px;text-align:right;top:1016.9px;font-size:14.4px;line-height:14.4px;transform:scaleX(1.0800);transform-origin:right center;color:#3a3a3a;">771,452</div>
<div class="t" style="left:1220.8px;width:90px;text-align:right;top:1016.9px;font-size:14.4px;line-height:14.4px;transform:scaleX(1.0800);transform-origin:right center;color:#3a3a3a;">717,510</div>
<div class="t" style="left:1316.8px;width:90px;text-align:right;top:1016.9px;font-size:14.4px;line-height:14.4px;transform:scaleX(1.0800);transform-origin:right center;color:#3a3a3a;">768,897</div>
<div class="t" style="left:1412.9px;width:90px;text-align:right;top:1016.9px;font-size:14.4px;line-height:14.4px;transform:scaleX(1.0800);transform-origin:right center;color:#3a3a3a;">769,583</div>
<div class="t" style="left:1508.9px;width:90px;text-align:right;top:1016.9px;font-size:14.4px;line-height:14.4px;transform:scaleX(1.0800);transform-origin:right center;color:#3a3a3a;">700,980</div>
<div class="t" style="left:1605.0px;width:90px;text-align:right;top:1016.9px;font-size:14.4px;line-height:14.4px;transform:scaleX(1.0800);transform-origin:right center;color:#3a3a3a;">563,257</div>
<div class="t" style="left:1701.0px;width:90px;text-align:right;top:1016.9px;font-size:14.4px;line-height:14.4px;transform:scaleX(1.0800);transform-origin:right center;color:#3a3a3a;">606,396</div>
<div class="t" style="left:1797.1px;width:90px;text-align:right;top:1016.9px;font-size:14.4px;line-height:14.4px;transform:scaleX(1.0800);transform-origin:right center;color:#3a3a3a;">606,231</div>
<div class="b" style="left:646px;top:583.2px;width:1248.5px;height:2px;background:#383838;"></div>
<div class="b" style="left:646px;top:709.7px;width:1248.5px;height:2px;background:#4e4e4e;"></div>
<div class="b" style="left:646px;top:810.6px;width:1248.5px;height:2px;background:#555;"></div>
<div class="b" style="left:646px;top:860.3px;width:1248.5px;height:2px;background:#444;"></div>
<div class="b" style="left:646px;top:884.8px;width:1248.5px;height:3px;background:#161616;"></div>
<div class="b" style="left:646px;top:960.2px;width:1248.5px;height:2px;background:#4a4a4a;"></div>
<div class="b" style="left:646px;top:984.3px;width:1248.5px;height:1.5px;background:#5a5a5a;"></div>
<div class="b" style="left:646px;top:986.7px;width:1248.5px;height:2px;background:#5a5a5a;"></div>
</div>
<div id="frame"></div>
</body></html>
